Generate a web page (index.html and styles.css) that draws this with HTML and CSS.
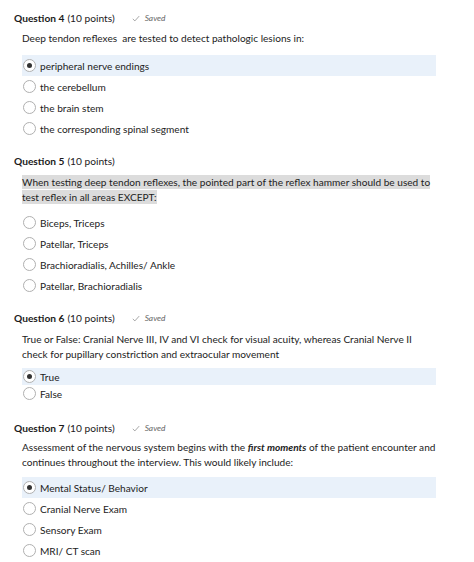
FILE: index.html
```html
<!DOCTYPE html>
<html>
<head>
<meta charset="utf-8">
<link rel="stylesheet" href="styles.css">
</head>
<body>
<div class="page">
  <section class="question q4">
    <div class="qhead"><b>Question 4</b> (10 points)<span class="saved"><svg class="check" viewBox="0 0 10 8" width="8" height="7"><path d="M1 4.5 L3.6 7 L9 1" fill="none" stroke="#9a9a9a" stroke-width="1.1"/></svg>Saved</span></div>
    <div class="qbody">
      <p class="qtext">Deep tendon reflexes&nbsp; are tested to detect pathologic lesions in:</p>
      <ul class="opts">
        <li class="opt sel"><span class="radio"></span>peripheral nerve endings</li>
        <li class="opt"><span class="radio"></span>the cerebellum</li>
        <li class="opt"><span class="radio"></span>the brain stem</li>
        <li class="opt"><span class="radio"></span>the corresponding spinal segment</li>
      </ul>
    </div>
  </section>
  <section class="question q5">
    <div class="qhead"><b>Question 5</b> (10 points)</div>
    <div class="qbody">
      <p class="qtext two"><span class="mark">When testing deep tendon reflexes, the pointed part of the reflex hammer should be used to test reflex in all areas EXCEPT:</span></p>
      <ul class="opts">
        <li class="opt"><span class="radio"></span>Biceps, Triceps</li>
        <li class="opt"><span class="radio"></span>Patellar, Triceps</li>
        <li class="opt"><span class="radio"></span>Brachioradialis, Achilles/ Ankle</li>
        <li class="opt"><span class="radio"></span>Patellar, Brachioradialis</li>
      </ul>
    </div>
  </section>
  <section class="question q6">
    <div class="qhead"><b>Question 6</b> (10 points)<span class="saved"><svg class="check" viewBox="0 0 10 8" width="8" height="7"><path d="M1 4.5 L3.6 7 L9 1" fill="none" stroke="#9a9a9a" stroke-width="1.1"/></svg>Saved</span></div>
    <div class="qbody">
      <p class="qtext">True or False: Cranial Nerve III, IV and VI check for visual acuity, whereas Cranial Nerve II check for pupillary constriction and extraocular movement</p>
      <ul class="opts tight">
        <li class="opt sel"><span class="radio"></span>True</li>
        <li class="opt"><span class="radio"></span>False</li>
      </ul>
    </div>
  </section>
  <section class="question q7">
    <div class="qhead"><b>Question 7</b> (10 points)<span class="saved"><svg class="check" viewBox="0 0 10 8" width="8" height="7"><path d="M1 4.5 L3.6 7 L9 1" fill="none" stroke="#9a9a9a" stroke-width="1.1"/></svg>Saved</span></div>
    <div class="qbody">
      <p class="qtext">Assessment of the nervous system begins with the <b><i>first moments</i></b> of the patient encounter and continues throughout the interview. This would likely include:</p>
      <ul class="opts">
        <li class="opt sel"><span class="radio"></span>Mental Status/ Behavior</li>
        <li class="opt"><span class="radio"></span>Cranial Nerve Exam</li>
        <li class="opt"><span class="radio"></span>Sensory Exam</li>
        <li class="opt"><span class="radio"></span>MRI/ CT scan</li>
      </ul>
    </div>
  </section>
</div>
</body>
</html>
```

FILE: styles.css
```css
html, body {
  margin: 0;
  padding: 0;
  background: #ffffff;
}
body {
  font-family: Lato, "Open Sans", "Liberation Sans", sans-serif;
  color: #222;
  font-size: 10.1px;
}
.page {
  padding: 10px 0 0 14px;
}
.question {
  margin-bottom: 14px;
}
.q6 {
  margin-bottom: 18px;
}
.qhead {
  font-size: 10.2px;
  line-height: 16px;
  height: 16px;
  display: flex;
  align-items: center;
  color: #1a1a1a;
}
.qhead b {
  font-weight: 700;
  margin-right: 3px;
}
.saved {
  display: inline-flex;
  align-items: center;
  margin-left: 17px;
  font-style: italic;
  font-size: 8.4px;
  color: #666;
}
.check {
  margin-right: 5px;
}
.qbody {
  padding-left: 8px;
  width: 414px;
}
.qtext {
  margin: 5px 0 8px 0;
  line-height: 15px;
}
.q4 .qtext {
  margin-bottom: 9px;
}
.q5 .qtext {
  margin-top: 6px;
}
.q6 .qtext {
  margin-top: 6px;
  margin-bottom: 6px;
}
.q7 .qtext {
  margin-top: 4px;
  margin-bottom: 7px;
}
.qtext.two {
  line-height: 14.5px;
  margin-bottom: 8px;
}
.mark {
  background: #dcdcdc;
  padding: 1px 0 1px 0;
}
.opts {
  list-style: none;
  margin: 0;
  padding: 0;
}
.opt {
  display: flex;
  align-items: center;
  height: 21px;
}
.tight .opt {
  height: 17px;
}
.opt.sel {
  background: #e9f1fa;
}
.radio {
  box-sizing: border-box;
  width: 13px;
  height: 13px;
  border: 1px solid #b0b0b0;
  border-radius: 50%;
  background: #fff;
  margin: 0 4px 0 1px;
  display: flex;
  align-items: center;
  justify-content: center;
  flex: none;
}
.sel .radio::after {
  content: "";
  width: 5px;
  height: 5px;
  border-radius: 50%;
  background: #333;
}
```
